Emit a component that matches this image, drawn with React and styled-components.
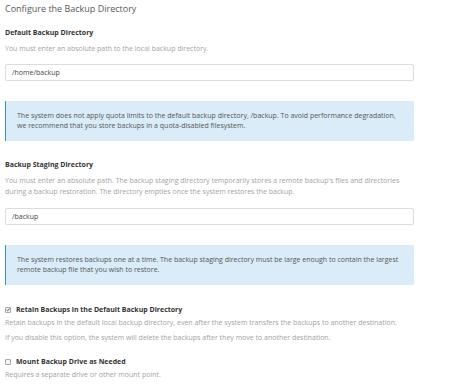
import React from "react";
import styled, { createGlobalStyle } from "styled-components";

const Global = createGlobalStyle`
  html, body { margin: 0; padding: 0; background: #fff; }
  body { font-family: "Open Sans", "Liberation Sans", sans-serif; }
`;

const Page = styled.div`
  width: 409px;
  padding: 2px 0 0 5px;
  display: flex;
  flex-direction: column;
`;

const Title = styled.h2`
  margin: 0;
  font-size: 9px;
  line-height: 13px;
  font-weight: 400;
  color: #595959;
`;

const Section = styled.div`
  margin-top: ${(p) => p.$mt || 0}px;
  display: flex;
  flex-direction: column;
`;

const Label = styled.div`
  font-size: 7px;
  line-height: 10px;
  font-weight: 700;
  color: #333;
  display: flex;
  align-items: center;
  gap: 5px;
`;

const Help = styled.p`
  margin: ${(p) => p.$mt ?? 5}px 0 0;
  font-size: 7px;
  line-height: 11px;
  color: #a3a3a3;
`;

const Input = styled.div`
  margin-top: ${(p) => p.$mt || 10}px;
  height: 17px;
  box-sizing: border-box;
  border: 1px solid #dcdcdc;
  border-radius: 2px;
  padding: 0 6px;
  display: flex;
  align-items: center;
  font-size: 7px;
  color: #444;
`;

const Alert = styled.div`
  margin-top: ${(p) => p.$mt || 18}px;
  height: 40px;
  box-sizing: border-box;
  background: #d9ecf8;
  border-left: 1px solid #3c91c8;
  padding: 0 11px;
  display: flex;
  flex-direction: column;
  justify-content: center;
  font-size: 7px;
  line-height: 10px;
  color: #555;
`;

const Box = styled.span`
  width: 6px;
  height: 6px;
  box-sizing: border-box;
  border: 1px solid #a8a8a8;
  border-radius: 1px;
  background: #f2f2f2;
  display: inline-flex;
  align-items: center;
  justify-content: center;
`;

const Check = ({ checked }) => (
  <Box>
    {checked && (
      <svg width="6" height="6" viewBox="0 0 6 6">
        <path d="M1 3 L2.4 4.4 L5.2 0.8" stroke="#333" strokeWidth="1.2" fill="none" />
      </svg>
    )}
  </Box>
);

export default function App() {
  return (
    <>
      <Global />
      <Page>
        <Title>Configure the Backup Directory</Title>
        <Section $mt={13}>
          <Label>Default Backup Directory</Label>
          <Help>You must enter an absolute path to the local backup directory.</Help>
          <Input>/home/backup</Input>
        </Section>
        <Alert $mt={20}>
          <div>The system does not apply quota limits to the default backup directory, /backup. To avoid performance degradation,</div>
          <div>we recommend that you store backups in a quota-disabled filesystem.</div>
        </Alert>
        <Section $mt={19}>
          <Label>Backup Staging Directory</Label>
          <Help $mt={5}>
            You must enter an absolute path. The backup staging directory temporarily stores a remote backup's files and directories
            <br />
            during a backup restoration. The directory empties once the system restores the backup.
          </Help>
          <Input $mt={11}>/backup</Input>
        </Section>
        <Alert $mt={20}>
          <div>The system restores backups one at a time. The backup staging directory must be large enough to contain the largest</div>
          <div>remote backup file that you wish to restore.</div>
        </Alert>
        <Section $mt={20}>
          <Label><Check checked />Retain Backups in the Default Backup Directory</Label>
          <Help $mt={2}>Retain backups in the default local backup directory, even after the system transfers the backups to another destination.</Help>
          <Help $mt={4}>If you disable this option, the system will delete the backups after they move to another destination.</Help>
        </Section>
        <Section $mt={14}>
          <Label><Check />Mount Backup Drive as Needed</Label>
          <Help $mt={2}>Requires a separate drive or other mount point.</Help>
        </Section>
      </Page>
    </>
  );
}
